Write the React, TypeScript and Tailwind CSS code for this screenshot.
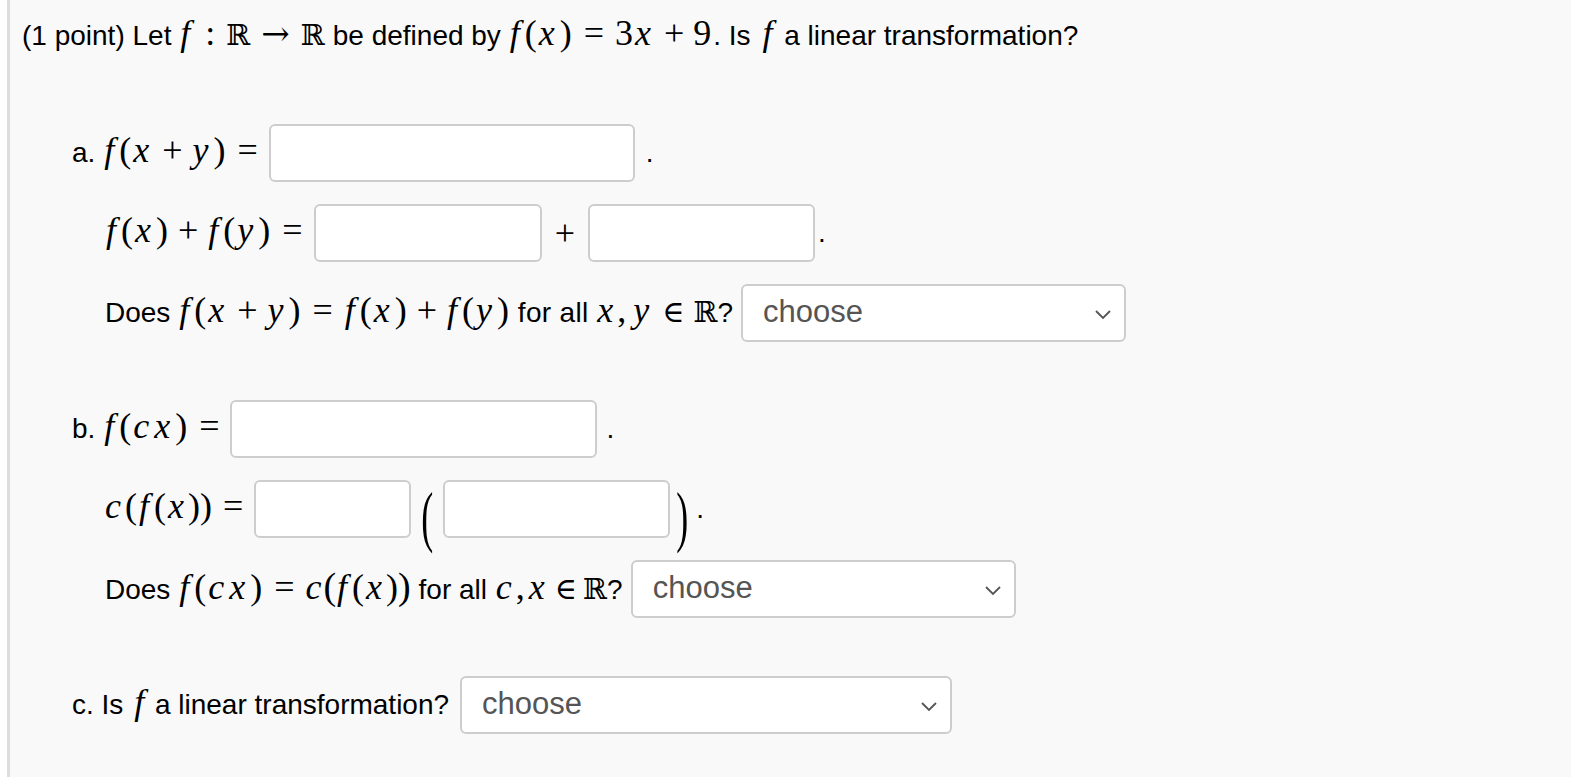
import React from "react";

const M = ({ children }: { children: React.ReactNode }) => (
  <span className="font-['Liberation_Serif','DejaVu_Serif',serif] text-[36px] leading-none text-black">
    {children}
  </span>
);
const V = ({ c }: { c: string }) => <span className="italic pl-[1px] pr-[4px]">{c}</span>;
const P = ({ c }: { c: string }) => <span className="px-[1px]">{c}</span>;
const Rel = ({ c }: { c: string }) => <span className="px-[11px]">{c}</span>;
const Bin = ({ c }: { c: string }) => <span className="px-[9px]">{c}</span>;
const In = ({ p }: { p: string }) => <span className={`text-[30px] ${p}`}>∈</span>;
const Comma = ({ p }: { p: string }) => <span className={p}>,</span>;
const RR = () => (
  <span className="font-['DejaVu_Serif','DejaVu_Sans',serif] text-[29px] font-light">ℝ</span>
);
const Arrow = () => (
  <span className="px-[11px] font-['DejaVu_Serif','DejaVu_Sans',serif] text-[34px]">→</span>
);

const Input = ({ w }: { w: string }) => (
  <div className={`h-[58px] shrink-0 rounded-[6px] border-2 border-[#cdcdcd] bg-white ${w}`} />
);

const Select = ({ w }: { w: string }) => (
  <div
    className={`flex h-[58px] shrink-0 items-center justify-between rounded-[6px] border-2 border-[#cdcdcd] bg-white pl-[20px] pr-[12px] ${w}`}
  >
    <span className="pb-[3px] text-[31px] leading-none text-[#555555]">choose</span>
    <svg width="18" height="12" viewBox="0 0 18 12" className="mt-[2px]">
      <polyline points="2,3 9,10 16,3" fill="none" stroke="#555555" strokeWidth="1.8" />
    </svg>
  </div>
);

const Row = ({ className, children }: { className: string; children: React.ReactNode }) => (
  <div className={`flex h-[58px] items-center text-[28px] ${className}`}>{children}</div>
);

export default function App() {
  return (
    <div className="min-h-[777px] bg-white pl-[7px] font-['Liberation_Sans',Arial,sans-serif] text-black">
      <div className="min-h-[777px] border-l-[3px] border-[#dddddd] bg-[#f9f9f9] pl-[12px] pt-[7px] pb-[40px]">
        <Row className="">
          <span className="whitespace-nowrap">
            (1 point) Let{" "}
            <M>
              <V c="f" />
              <Rel c=":" />
              <RR />
              <Arrow />
              <RR />
            </M>{" "}
            be defined by{" "}
            <M>
              <V c="f" />
              <P c="(" />
              <V c="x" />
              <P c=")" />
              <Rel c="=" />
              <span className="pr-[1px]">3</span>
              <V c="x" />
              <Bin c="+" />
              <span className="pr-[2px]">9</span>
            </M>
            . Is{" "}
            <M>
              <span className="italic px-[4px]">f</span>
            </M>{" "}
            a linear transformation?
          </span>
        </Row>

        {/* a */}
        <Row className="mt-[59px] ml-[50px]">
          <span className="whitespace-nowrap">
            a.{" "}
            <M>
              <V c="f" />
              <P c="(" />
              <V c="x" />
              <Bin c="+" />
              <V c="y" />
              <P c=")" />
              <Rel c="=" />
            </M>
          </span>
          <Input w="w-[366px]" />
          <span className="ml-[11px]">.</span>
        </Row>

        <Row className="mt-[22px] ml-[83px]">
          <span className="whitespace-nowrap">
            <M>
              <V c="f" />
              <P c="(" />
              <V c="x" />
              <P c=")" />
              <Bin c="+" />
              <V c="f" />
              <P c="(" />
              <V c="y" />
              <P c=")" />
              <Rel c="=" />
            </M>
          </span>
          <Input w="w-[228px]" />
          <M>
            <span className="px-[13px]">+</span>
          </M>
          <Input w="w-[227px]" />
          <span className="ml-[3px]">.</span>
        </Row>

        <Row className="mt-[22px] ml-[83px]">
          <span className="whitespace-nowrap">
            Does{" "}
            <M>
              <V c="f" />
              <P c="(" />
              <V c="x" />
              <Bin c="+" />
              <V c="y" />
              <P c=")" />
              <Rel c="=" />
              <V c="f" />
              <P c="(" />
              <V c="x" />
              <P c=")" />
              <Bin c="+" />
              <V c="f" />
              <P c="(" />
              <V c="y" />
              <P c=")" />
            </M>{" "}
            <span className="tracking-[0.3px]">for all</span>{" "}
            <M>
              <V c="x" />
              <Comma p="pr-[6px]" />
              <V c="y" />
              <In p="px-[9px]" />
              <RR />
            </M>
            ?
          </span>
          <div className="ml-[8px]">
            <Select w="w-[385px]" />
          </div>
        </Row>

        {/* b */}
        <Row className="mt-[58px] ml-[50px]">
          <span className="whitespace-nowrap">
            b.{" "}
            <M>
              <V c="f" />
              <P c="(" />
              <V c="c" />
              <V c="x" />
              <P c=")" />
              <Rel c="=" />
            </M>
          </span>
          <Input w="w-[367px]" />
          <span className="ml-[9px]">.</span>
        </Row>

        <Row className="mt-[22px] ml-[83px]">
          <span className="whitespace-nowrap">
            <M>
              <span className="italic pr-[3px]">c</span>
              <P c="(" />
              <V c="f" />
              <P c="(" />
              <V c="x" />
              <span>))</span>
              <Rel c="=" />
            </M>
          </span>
          <Input w="w-[157px]" />
          <span className="mx-[10px] inline-block translate-y-[8px] scale-y-[1.85] font-['Liberation_Serif',serif] text-[36px] leading-none">
            (
          </span>
          <Input w="w-[227px]" />
          <span className="ml-[6px] inline-block translate-y-[8px] scale-y-[1.85] font-['Liberation_Serif',serif] text-[36px] leading-none">
            )
          </span>
          <span className="ml-[8px]">.</span>
        </Row>

        <Row className="mt-[22px] ml-[83px]">
          <span className="whitespace-nowrap">
            Does{" "}
            <M>
              <V c="f" />
              <P c="(" />
              <V c="c" />
              <V c="x" />
              <P c=")" />
              <Rel c="=" />
              <span className="italic pr-[2px]">c</span>
              <span className="text-[38px]">(</span>
              <V c="f" />
              <P c="(" />
              <V c="x" />
              <span>)</span>
              <span className="text-[38px]">)</span>
            </M>{" "}
            for all{" "}
            <M>
              <V c="c" />
              <Comma p="pr-[3px]" />
              <V c="x" />
              <In p="px-[6px]" />
              <RR />
            </M>
            ?
          </span>
          <div className="ml-[8px]">
            <Select w="w-[385px]" />
          </div>
        </Row>

        {/* c */}
        <Row className="mt-[58px] ml-[50px]">
          <span className="whitespace-nowrap">
            c. Is{" "}
            <M>
              <span className="italic px-[3px]">f</span>
            </M>{" "}
            a linear transformation?
          </span>
          <div className="ml-[11px]">
            <Select w="w-[492px]" />
          </div>
        </Row>
      </div>
    </div>
  );
}
